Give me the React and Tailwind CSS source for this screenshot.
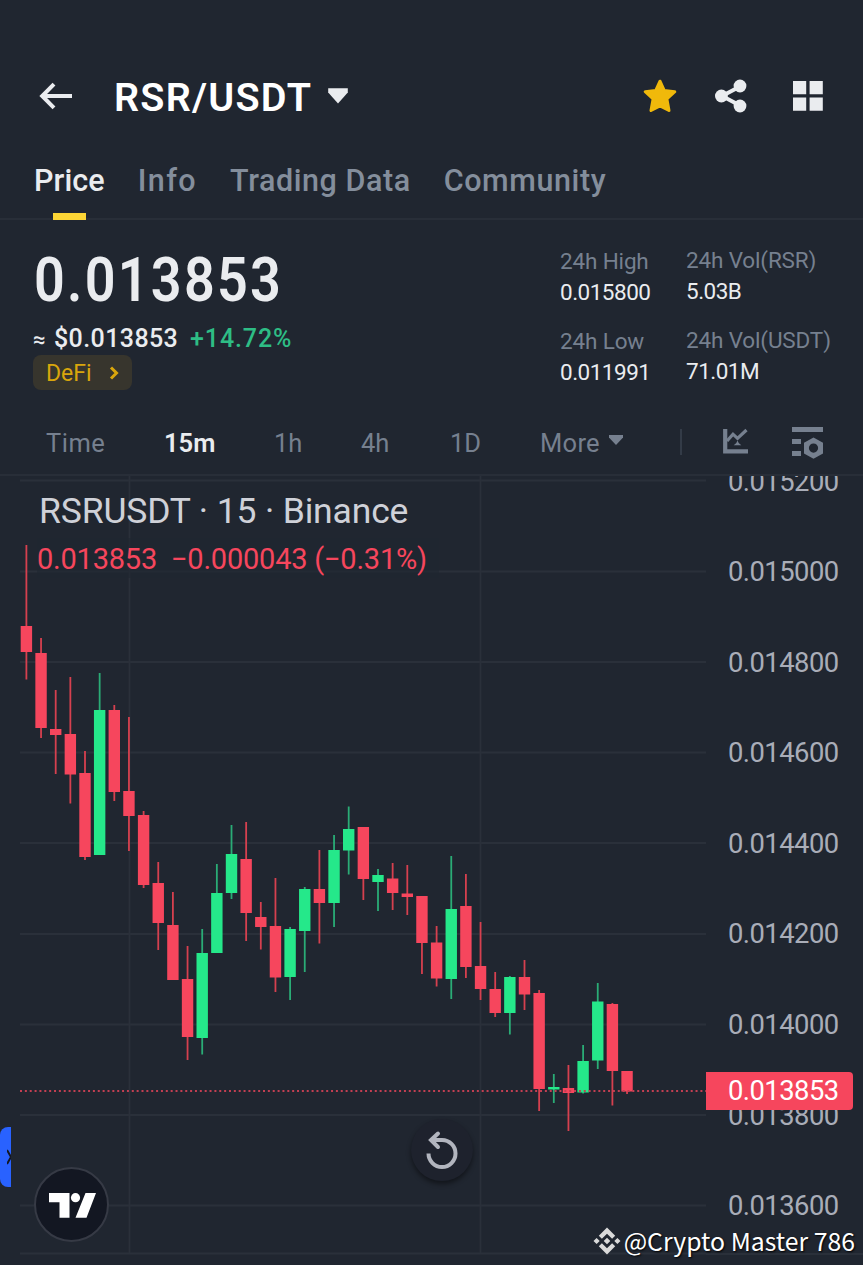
import React, { useState } from "react";

const TABS = [
    { name: "Price", tracking: "tracking-[0.1px]" },
    { name: "Info", tracking: "tracking-[1.4px]" },
    { name: "Trading Data", tracking: "tracking-[0.55px]" },
    { name: "Community", tracking: "tracking-[0.6px]" },
];

const LEVELS = ["0.015200", "0.015000", "0.014800", "0.014600", "0.014400", "0.014200", "0.014000", "0.013800", "0.013600"];

const GRID_Y = [480.5, 571.5, 662, 752.5, 843, 934, 1024.5, 1115, 1205.5];

// [body top, body bottom, wick top, wick bottom, is up]
const CANDLES = [
    [626, 652, 545, 679.5, 0],
    [653, 728, 638, 738, 0],
    [729, 735, 690, 774, 0],
    [734, 774.5, 677, 803.5, 0],
    [773, 857, 751, 860, 0],
    [710, 855, 673, 855, 1],
    [710, 792, 705, 801, 0],
    [791, 816, 717, 851, 0],
    [815, 885, 811, 888, 0],
    [883, 923, 862, 950, 0],
    [925, 980, 892, 980, 0],
    [979, 1037, 946, 1060, 0],
    [953, 1038, 929, 1054.5, 1],
    [893, 953, 864, 953, 1],
    [854, 893, 825, 899, 1],
    [859, 913, 822, 941, 0],
    [917, 927, 902, 949.5, 0],
    [926, 977.5, 878, 992, 0],
    [929, 977, 927, 1000, 1],
    [889, 931, 887, 972, 1],
    [889, 903, 850, 943.5, 0],
    [850, 903, 835, 927, 1],
    [829, 850.5, 806.5, 874.5, 1],
    [827, 879, 827, 900, 0],
    [875, 882, 869, 911, 1],
    [878.5, 893, 863, 910, 0],
    [893.5, 897, 865, 915, 0],
    [896, 943, 896, 974, 0],
    [942.5, 978.5, 926, 986.5, 0],
    [909, 979, 856, 999, 1],
    [906, 967, 874, 978, 0],
    [966, 989, 922, 1000, 0],
    [989, 1013, 972, 1017, 0],
    [977, 1013, 976, 1034.5, 1],
    [977, 994.5, 960, 1010, 0],
    [993, 1089, 990, 1111, 0],
    [1087, 1089.5, 1074, 1103, 1],
    [1088, 1093, 1065, 1131, 0],
    [1061, 1092.5, 1045, 1093.5, 1],
    [1001.5, 1060.5, 983, 1069, 1],
    [1004, 1071, 1003, 1105.5, 0],
    [1071, 1091.5, 1071, 1094, 0],
];

function Header() {
    return (
        <header className="flex items-center h-[52px] mt-[70px] pl-[39px] pr-[40px] text-[#eaecef]">
            <svg className="w-[34px] h-[28px]" viewBox="0 0 34 28" fill="none" stroke="currentColor" strokeWidth="4">
                <path d="M33 14H4M15 2.2L3.2 14L15 25.8" />
            </svg>
            <h1 className="ml-[41px] w-[200px] pt-[4px] text-[39.5px] leading-[52px] font-semibold text-white tracking-[1.25px] whitespace-nowrap">RSR/USDT</h1>
            <svg className="ml-[13px] w-[22px] h-[18px]" viewBox="0 0 22 18" fill="currentColor">
                <path d="M1.2 1.3h19.6v4.2L11 16.6L1.2 5.5z" />
            </svg>
            <svg className="ml-auto w-[34px] h-[34px]" viewBox="0 0 34 34" fill="#f0b90b" stroke="#f0b90b" strokeWidth="3" strokeLinejoin="round">
                <path d="M17 2.2l4.2 9.2 10.6 1.300-7.900 7.200 2.100 11.600L17 26.800l-9 4.700 2.100-11.600-7.900-7.200 10.600-1.300z" />
            </svg>
            <svg className="ml-[37px] w-[34px] h-[34px]" viewBox="0 0 34 34" fill="currentColor">
                <path d="M8 17L27 7M8 17L27 27" stroke="currentColor" strokeWidth="4" />
                <circle cx="7.4" cy="17" r="6.4" />
                <circle cx="26" cy="7" r="6.4" />
                <circle cx="26" cy="27" r="6.4" />
            </svg>
            <svg className="ml-[45px] w-[30px] h-[30px]" viewBox="0 0 30 30" fill="currentColor">
                <path d="M0 0h13.2v13.2H0zM16.6 0h13.2v13.2H16.6zM0 16.6h13.2v13.2H0zM16.6 16.6h13.2v13.2H16.6z" />
            </svg>
        </header>
    );
}

function Tabs() {
    const [active, setActive] = useState("Price");
    return (
        <nav className="flex gap-[33px] h-[98px] pl-[34px] pt-[38px] border-b-2 border-[#282e38]">
            {TABS.map(({ name, tracking }) => (
                <button
                    key={name}
                    type="button"
                    onClick={() => setActive(name)}
                    className={`flex flex-col items-center text-[30.5px] leading-[42px] font-medium whitespace-nowrap ${tracking} ${name === active ? "text-[#eaecef]" : "text-[#848e9c]"}`}
                >
                    {name}
                    {name === active && <span className="shrink-0 mt-[11px] w-[33px] h-[7px] bg-[#fcd535]"></span>}
                </button>
            ))}
        </nav>
    );
}

function Stat({ label, value }) {
    return (
        <div className="h-[80px] whitespace-nowrap">
            <div className="text-[22.5px] leading-[30px] text-[#76808f] tracking-[-0.15px]">{label}</div>
            <div className="text-[22.5px] leading-[32px] text-[#eaecef] tracking-[-0.5px]">{value}</div>
        </div>
    );
}

function Ticker() {
    return (
        <section className="flex h-[190px] pl-[33px]">
            <div className="w-[527px] pt-[24px] text-[#eaecef]">
                <div className="h-[72px] pl-[1px]">
                    <span className="inline-block origin-left scale-x-[0.87] text-[62px] leading-[72px] font-semibold tracking-[2.6px]">0.013853</span>
                </div>
                <div className="flex items-center h-[40px] mt-[3px] text-[25px] font-medium whitespace-nowrap">
                    <span className="w-[21px] text-[22px]">≈</span>
                    <span className="w-[136px] tracking-[0.4px]">$0.013853</span>
                    <span className="text-[#2ebd85] tracking-[0.9px]">+14.72%</span>
                </div>
                <div className="flex items-center w-[99px] h-[35px] -mt-[4px] pl-[13px] rounded-lg bg-[#37352d] text-[#d9a60c] text-[23px] leading-[35px]">
                    <span className="w-[63px] pt-[1px]">DeFi</span>
                    <svg className="w-[10px] h-[14px]" viewBox="0 0 10 14" fill="none" stroke="currentColor" strokeWidth="3">
                        <path d="M2 1.5L7.5 7L2 12.5" />
                    </svg>
                </div>
            </div>
            <div className="w-[126px] pt-[26px]">
                <Stat label="24h High" value="0.015800" />
                <Stat label="24h Low" value="0.011991" />
            </div>
            <div className="pt-[25px]">
                <Stat label="24h Vol(RSR)" value="5.03B" />
                <Stat label="24h Vol(USDT)" value="71.01M" />
            </div>
        </section>
    );
}

function Intervals() {
    return (
        <div className="flex items-center h-[66px] pl-[46px] pt-[2px] text-[25.5px] text-[#76808f] border-b-2 border-[#282e38] whitespace-nowrap">
            <span className="w-[118px] tracking-[0.5px]">Time</span>
            <span className="w-[110px] font-semibold text-[#eaecef]">15m</span>
            <span className="w-[87px]">1h</span>
            <span className="w-[89px]">4h</span>
            <span className="w-[90px]">1D</span>
            <span className="w-[69px] tracking-[0.3px]">More</span>
            <svg className="w-[14px] h-[12px] mb-[7px]" viewBox="0 0 14 12" fill="currentColor">
                <path d="M0 1h14v2.5L7 11L0 3.5z" />
            </svg>
            <span className="ml-[57px] mb-[3px] w-[2px] h-[26px] bg-[#333b47]"></span>
            <svg className="ml-[41px] mb-[4px] w-[25px] h-[26px]" viewBox="0 0 25 26" fill="none" stroke="currentColor">
                <path d="M2.2 1v22.4H25" strokeWidth="4.2" />
                <path d="M4 13L10 6.2L14.5 10.4L23.5 2" strokeWidth="3.2" />
                <path d="M14.5 12.500l1.200 2.500 2.600 2.200h-7.600l2.600-2.200z" fill="currentColor" stroke="none" />
            </svg>
            <svg className="ml-[44px] mb-[1px] w-[32px] h-[32px]" viewBox="0 0 32 32" fill="currentColor">
                <path d="M0 0h31v5H0zM0 12h9v5H0zM0 24h9v5H0z" />
                <path fillRule="evenodd" d="M21.500 10.500l9.500 5.300v10.600l-9.500 5.300l-9.500-5.300V15.800z M21.500 16.500a4.600 4.600 0 1 0 0 9.200a4.600 4.600 0 1 0 0-9.200z" />
            </svg>
        </div>
    );
}

function Chart() {
    return (
        <svg className="block w-[706px] h-[789px]" viewBox="0 476 706 789">
            <g stroke="#2a303a" strokeWidth="1.8">
                {GRID_Y.map((y) => (
                    <path key={y} d={`M20 ${y}H706`} />
                ))}
                <path d="M129.5 476V1253M480.5 476V1253M20 1253.5H706" />
            </g>
            {CANDLES.map(([top, bottom, high, low, up], i) => {
                const x = 26.4 + i * 14.65;
                return (
                    <g key={i}>
                        <path d={`M${x} ${high}V${low}`} stroke={up ? "#2aac76" : "#d6404f"} strokeWidth="1.8" />
                        <rect x={x - 5.7} y={top} width="11.4" height={bottom - top} fill={up ? "#25e88a" : "#f6465d"} />
                    </g>
                );
            })}
            <path d="M20 1091H706" stroke="#c23f52" strokeWidth="2" strokeDasharray="2 2.86" />
        </svg>
    );
}

function PriceAxis() {
    return (
        <div className="relative w-[157px] h-[789px] overflow-hidden text-[27.4px] tracking-[-0.55px] text-[#a9adb8]">
            <div className="-mt-[39.5px] pl-[22px]">
                {LEVELS.map((level) => (
                    <div key={level} className="h-[90.6px] leading-[91px]">{level}</div>
                ))}
            </div>
            <div className="absolute left-0 top-[777px] w-[157px] h-[2px] bg-[#2a303a]"></div>
            <div className="absolute left-0 top-[596px] w-[147px] h-[38px] pl-[22px] rounded-r bg-[#f6465d] text-white leading-[39px]">0.013853</div>
        </div>
    );
}

function Watermark() {
    return (
        <div className="absolute right-[8px] bottom-[6px] flex items-center h-[36px] text-[24.8px] text-white font-['Noto_Sans_CJK_SC',sans-serif] whitespace-nowrap [text-shadow:1px_1px_2px_#000]">
            <svg className="w-[28px] h-[28px] mr-[3px]" viewBox="0 0 28 28" fill="#dadada">
                <path d="M14 0.5L22.2 8.7L19.1 11.8L14 6.7L8.9 11.8L5.8 8.7zM14 27.5L22.2 19.3L19.1 16.2L14 21.3L8.9 16.2L5.8 19.3z" />
                <path d="M3.6 10.9L6.7 14L3.6 17.1L0.5 14zM24.4 10.9L27.5 14L24.4 17.1L21.3 14zM14 10.7L17.3 14L14 17.3L10.7 14z" />
            </svg>
            @Crypto Master 786
        </div>
    );
}

export default function App() {
    return (
        <div className="flow-root w-[863px] h-[1265px] overflow-hidden bg-[#202630] font-[Roboto,sans-serif]">
            <Header />
            <Tabs />
            <Ticker />
            <Intervals />
            <main className="relative flex h-[789px]">
                <Chart />
                <PriceAxis />

                <div className="absolute left-[37px] top-[12px] whitespace-nowrap">
                    <div className="w-[376px] pl-[2px] h-[46px] leading-[46px] text-[35.5px] text-[#cfd1d8] tracking-[-0.15px]">RSRUSDT · 15 · Binance</div>
                    <div className="mt-[4px] w-[402px] h-[40px] leading-[42px] text-[29px] text-[#f6465d] tracking-[-0.22px] bg-[#202630]/60">
                        <span className="mr-[14px]">0.013853</span>
                        <span>−0.000043 (−0.31%)</span>
                    </div>
                </div>

                <div className="absolute left-0 top-[651px] flex items-center justify-end w-[11px] h-[60px] rounded-l-lg bg-[#2962ff] overflow-hidden">
                    <svg className="w-[4px] h-[16px]" viewBox="0 0 4 16" fill="none" stroke="#131722" strokeWidth="2">
                        <path d="M0 1L4 8L0 15" />
                    </svg>
                </div>

                <button type="button" className="absolute left-[411px] top-[643px] flex items-center justify-center w-[62px] h-[62px] rounded-full bg-[#1e222d] shadow-[0_3px_5px_rgba(0,0,0,0.45)]">
                    <svg className="w-[34px] h-[40px]" viewBox="0 0 34 40" fill="none" stroke="#b2b5be" strokeWidth="4" strokeLinecap="round">
                        <path d="M3.5 23.5A13.5 13.5 0 1 0 17 10H6" strokeLinecap="butt" />
                        <path d="M13 3.5L6 10L13 17" />
                    </svg>
                </button>

                <div className="absolute left-[34px] top-[691px] flex items-center justify-center w-[75px] h-[75px] pt-[2px] pl-[1px] rounded-full bg-[#131722] border-2 border-[#363a45]">
                    <svg className="w-[47px] h-[25px]" viewBox="0 0 47 25" fill="#fff">
                        <path d="M0 0h20.5v24.7H10.5V9.2H0zM36.5 0H47L37.500 24.700H26.500z" />
                        <circle cx="26.5" cy="4.7" r="4.6" />
                    </svg>
                </div>

                <Watermark />
            </main>
        </div>
    );
}
